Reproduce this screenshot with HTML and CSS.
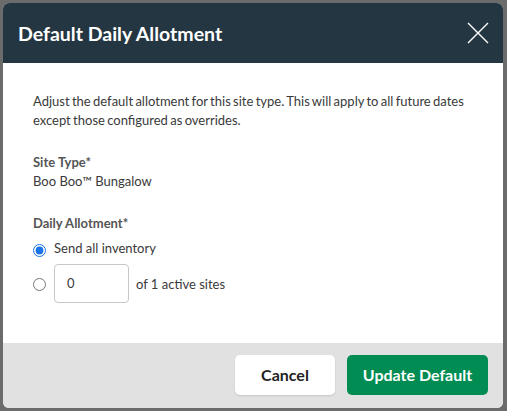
FILE: index.html
```html
<!DOCTYPE html>
<html lang="en">
<head>
<meta charset="utf-8">
<title>Default Daily Allotment</title>
<link rel="stylesheet" href="styles.css">
</head>
<body>
<div class="backdrop">
  <div class="modal" role="dialog" aria-labelledby="modal-title">
    <header class="modal-header">
      <h2 id="modal-title" class="modal-title">Default Daily Allotment</h2>
      <button class="close-btn" aria-label="Close">
        <svg width="22" height="22" viewBox="0 0 22 22" aria-hidden="true">
          <path d="M1 1 L21 21 M21 1 L1 21" stroke="#ffffff" stroke-width="1.4" fill="none"/>
        </svg>
      </button>
    </header>
    <div class="modal-body">
      <p class="intro">Adjust the default allotment for this site type. This will apply to all future dates except those configured as overrides.</p>
      <div class="field">
        <div class="field-label">Site Type*</div>
        <div class="field-value">Boo Boo™ Bungalow</div>
      </div>
      <div class="field">
        <div class="field-label">Daily Allotment*</div>
        <label class="radio-row first">
          <input type="radio" name="allot" checked>
          <span>Send all inventory</span>
        </label>
        <label class="radio-row">
          <input type="radio" name="allot">
          <span class="num-box">0</span>
          <span>of 1 active sites</span>
        </label>
      </div>
    </div>
    <footer class="modal-footer">
      <button class="btn btn-cancel">Cancel</button>
      <button class="btn btn-primary">Update Default</button>
    </footer>
  </div>
</div>
</body>
</html>
```

FILE: styles.css
```css
* { box-sizing: border-box; }
html, body { margin: 0; padding: 0; }
body {
  background: #6b6b6b;
  font-family: Lato, "Open Sans", Arial, sans-serif;
  width: 507px;
  height: 411px;
  overflow: hidden;
}
.backdrop {
  padding: 3px 4px 3px 3px;
  height: 411px;
}
.modal {
  width: 500px;
  height: 405px;
  border-radius: 6px;
  overflow: hidden;
  display: flex;
  flex-direction: column;
  background: #ffffff;
}
.modal-header {
  height: 60px;
  flex: 0 0 60px;
  background: #243641;
  display: flex;
  align-items: center;
  justify-content: space-between;
  padding: 0 14px 0 15px;
}
.modal-title {
  margin: 0;
  color: #ffffff;
  font-size: 19.5px;
  font-weight: 700;
}
.close-btn {
  background: none;
  border: 0;
  padding: 0;
  width: 22px;
  height: 22px;
  display: flex;
  cursor: pointer;
}
.modal-body {
  flex: 1;
  padding: 29px 20px 0 30px;
  color: #3a3a3a;
  font-size: 13px;
  line-height: 19px;
}
.intro {
  margin: 0 0 23px 0;
  word-spacing: -1px;
}
.field { margin-bottom: 23px; }
.field-label { font-weight: 700; color: #555555; }
.field-value { color: #3a3a3a; }
.radio-row {
  display: flex;
  align-items: center;
  gap: 8px;
  margin-top: 7px;
}
.radio-row.first { margin-top: 6px; }
.radio-row input {
  margin: 0;
  width: 13px;
  height: 13px;
  accent-color: #1a73e8;
}
.radio-row.first input { margin-top: 4px; }
.num-box {
  width: 75px;
  height: 39px;
  border: 1px solid #c8c8c8;
  border-radius: 4px;
  padding: 0 12px;
  display: flex;
  align-items: center;
  color: #3a3a3a;
  margin-right: -1px;
  margin-top: -1px;
}
.modal-footer {
  flex: 0 0 65px;
  background: #e1e1e1;
  display: flex;
  justify-content: flex-end;
  align-items: center;
  gap: 12px;
  padding: 0 15px 2px 0;
}
.btn {
  height: 40px;
  border: 0;
  border-radius: 5px;
  font-family: inherit;
  font-size: 16px;
  font-weight: 700;
  cursor: pointer;
}
.btn-cancel {
  width: 100px;
  background: #ffffff;
  color: #222222;
  box-shadow: 0 1px 2px rgba(0,0,0,0.12);
}
.btn-primary {
  width: 141px;
  background: #008c52;
  color: #ffffff;
}
```
